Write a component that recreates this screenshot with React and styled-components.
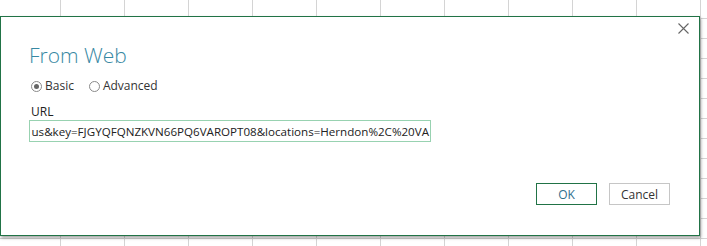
import React, {useState} from "react";
import styled, {createGlobalStyle} from "styled-components";

const GlobalStyle = createGlobalStyle`
    html, body {
        margin: 0;
        padding: 0;
        height: 100%;
    }
    body {
        background-color: #fff;
        background-image:
            linear-gradient(90deg, #d4d4d4 1px, transparent 1px),
            linear-gradient(180deg, #d4d4d4 1px, transparent 1px);
        background-size: 64px 20px;
        background-position: 60px 0, 0 18px;
        font-family: "Open Sans", "Noto Sans", sans-serif;
        overflow: hidden;
    }
`

const Page = styled.div`
    padding-top: 16px;
`

const Dialog = styled.div`
    box-sizing: border-box;
    width: 700px;
    height: 220px;
    background: #fff;
    border: 1px solid #217346;
    box-shadow: 1px 2px 3px rgba(0, 0, 0, 0.35);
    display: flex;
    flex-direction: column;
`

const TopBar = styled.div`
    display: flex;
    justify-content: flex-end;
    padding: 6px 10px 0 0;
    height: 20px;
`

const CloseButton = styled.button`
    width: 11px;
    height: 11px;
    padding: 0;
    border: none;
    background: none;
    display: flex;
    cursor: pointer;
`

const Body = styled.div`
    display: flex;
    flex-direction: column;
    padding-left: 28px;
`

const Title = styled.h1`
    margin: 0;
    font-size: 21px;
    line-height: 24px;
    font-weight: 300;
    color: #3788a3;
`

const RadioGroup = styled.div`
    display: flex;
    gap: 15px;
    margin-top: 11px;
    padding-left: 2px;
    height: 16px;
    align-items: center;
`

const RadioLabel = styled.label`
    display: flex;
    align-items: center;
    gap: 3px;
    font-size: 12px;
    line-height: 16px;
    color: #333;
    cursor: pointer;
`

const RadioCircle = styled.span`
    box-sizing: border-box;
    width: 11px;
    height: 11px;
    border-radius: 50%;
    border: 1px solid #8a8a8a;
    display: flex;
    align-items: center;
    justify-content: center;

    &::after {
        content: "";
        width: 5px;
        height: 5px;
        border-radius: 50%;
        background: ${props => props.checked ? "#666" : "transparent"};
    }
`

const FieldLabel = styled.div`
    margin-top: 10px;
    padding-left: 2px;
    font-size: 12px;
    line-height: 16px;
    color: #222;
`

const UrlBox = styled.div`
    box-sizing: border-box;
    width: 402px;
    height: 22px;
    border: 1px solid #98d2b1;
    display: flex;
    justify-content: flex-end;
    align-items: center;
    overflow: hidden;
    white-space: nowrap;
    padding-right: 1px;
    font-size: 11.6px;
    color: #222;
`

const Footer = styled.div`
    display: flex;
    justify-content: flex-end;
    gap: 12px;
    padding-right: 29px;
    margin-top: 41px;
`

const Button = styled.button`
    box-sizing: border-box;
    width: 61px;
    height: 22px;
    padding: 0;
    background: #fff;
    border: 1px solid ${props => props.primary ? "#217346" : "#c6c6c6"};
    color: ${props => props.primary ? "#2f6f8e" : "#333"};
    font-family: "Open Sans", "Noto Sans", sans-serif;
    font-size: 12px;
    cursor: pointer;
`

function App() {

    const [mode, setMode] = useState("basic");

    const url = "us&key=FJGYQFQNZKVN66PQ6VAROPT08&locations=Herndon%2C%20VA";

    return (
        <Page>
            <GlobalStyle />
            <Dialog>
                <TopBar>
                    <CloseButton aria-label="Close">
                        <svg width="11" height="11" viewBox="0 0 11 11">
                            <path d="M0.5 0.5 L10.5 10.5 M10.5 0.5 L0.5 10.5" stroke="#666" strokeWidth="1.1" fill="none" />
                        </svg>
                    </CloseButton>
                </TopBar>
                <Body>
                    <Title>From Web</Title>
                    <RadioGroup>
                        <RadioLabel onClick={() => setMode("basic")}>
                            <RadioCircle checked={mode === "basic"} />Basic
                        </RadioLabel>
                        <RadioLabel onClick={() => setMode("advanced")}>
                            <RadioCircle checked={mode === "advanced"} />Advanced
                        </RadioLabel>
                    </RadioGroup>
                    <FieldLabel>URL</FieldLabel>
                    <UrlBox>{url}</UrlBox>
                </Body>
                <Footer>
                    <Button primary>OK</Button>
                    <Button>Cancel</Button>
                </Footer>
            </Dialog>
        </Page>
    )
}

export default App;
